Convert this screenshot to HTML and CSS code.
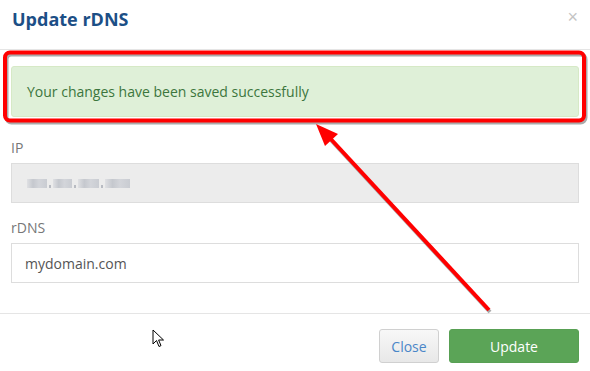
FILE: index.html
```html
<!DOCTYPE html>
<html>
<head>
  <title>Update rDNS</title>
  <link rel="stylesheet" href="styles.css">
</head>
<body>
  <div class="modal">
    <div class="modal-header">
      <h4 class="modal-title">Update rDNS</h4>
      <span class="close-x">&times;</span>
    </div>

    <div class="modal-body">
      <div class="alert-success">Your changes have been saved successfully</div>

      <div class="form-group">
        <label>IP</label>
        <div class="input disabled">
          <span class="blur b1"></span><span class="dot"></span>
          <span class="blur b2"></span><span class="dot"></span>
          <span class="blur b3"></span><span class="dot"></span>
          <span class="blur b4"></span>
        </div>
      </div>

      <div class="form-group">
        <label>rDNS</label>
        <input type="text" class="input" value="mydomain.com">
      </div>
    </div>

    <div class="modal-footer">
      <button class="btn btn-default">Close</button>
      <button class="btn btn-success">Update</button>
    </div>
  </div>

  <!-- annotation drawn over the screenshot -->
  <svg class="annotation" width="590" height="371" viewBox="0 0 590 371">
    <rect x="6.5" y="54.5" width="579" height="68" rx="5" fill="none" stroke="#555" stroke-opacity="0.5" stroke-width="4"/>
    <rect x="5" y="52.5" width="579" height="68" rx="5" fill="none" stroke="#ff0000" stroke-width="4"/>
    <line x1="490" y1="312" x2="329" y2="138" stroke="#555" stroke-opacity="0.5" stroke-width="4"/>
    <line x1="489" y1="310" x2="328" y2="136" stroke="#ff0000" stroke-width="4"/>
    <polygon points="316,124 338,134 325,146" fill="#ff0000"/>
  </svg>

  <svg class="cursor" width="14" height="20" viewBox="0 0 14 20">
    <path d="M1 1 L1 15 L4.5 11.5 L7 17.5 L9 16.6 L6.6 11 L11.5 11 Z" fill="#fff" stroke="#000" stroke-width="1"/>
  </svg>
</body>
</html>
```

FILE: styles.css
```css
body {
  margin: 0;
  padding: 0;
  background: #fff;
  font-family: "Open Sans", "Liberation Sans", sans-serif;
  font-size: 14px;
  color: #555;
  position: relative;
  width: 590px;
  height: 371px;
  overflow: hidden;
}
.modal {
  width: 590px;
}
.modal-header {
  height: 49px;
  border-bottom: 1px solid #e5e5e5;
  display: flex;
  justify-content: space-between;
  align-items: flex-start;
  padding: 0 12px;
}
.modal-title {
  margin: 7px 0 0 0;
  font-size: 18px;
  font-weight: bold;
  color: #1c4f86;
}
.close-x {
  margin-top: 7px;
  font-size: 18px;
  color: #c4c4c4;
  font-family: "Liberation Sans", sans-serif;
}
.modal-body {
  padding: 16px 11px 30px 11px;
}
.alert-success {
  height: 49px;
  line-height: 49px;
  background: #dff0d8;
  border: 1px solid #d6e9c6;
  border-radius: 3px;
  color: #3c763d;
  padding: 0 15px;
}
.form-group {
  margin-top: 21px;
}
.form-group + .form-group {
  margin-top: 15px;
}
label {
  display: block;
  color: #777;
  margin-bottom: 5px;
  line-height: 20px;
}
.input {
  box-sizing: border-box;
  display: flex;
  align-items: center;
  width: 568px;
  height: 40px;
  border: 1px solid #ddd;
  background: #fff;
  padding: 0 13px;
  font-family: "Open Sans", "Liberation Sans", sans-serif;
  font-size: 14px;
  color: #555;
  margin: 0;
  outline: none;
}
.input.disabled {
  background: #ececec;
  padding-left: 15px;
}
.blur {
  display: inline-block;
  height: 9px;
  background: linear-gradient(90deg, #dfe0e3, #c5c8ce 30%, #d3d5da 60%, #c9ccd2);
}
.b1 { width: 20px; }
.b2 { width: 19px; }
.b3 { width: 21px; }
.b4 { width: 25px; }
.dot {
  display: inline-block;
  width: 2px;
  height: 3px;
  margin: 6px 2px 0 2px;
  background: #b8bbc2;
}
.modal-footer {
  border-top: 1px solid #e5e5e5;
  display: flex;
  justify-content: flex-end;
  gap: 10px;
  padding: 15px 11px 0 0;
}
.btn {
  height: 34px;
  border-radius: 3px;
  font-family: "Open Sans", "Liberation Sans", sans-serif;
  font-size: 14px;
  cursor: pointer;
}
.btn-default {
  width: 60px;
  background: linear-gradient(#f8f8f8, #e8e8e8);
  border: 1px solid #d0d0d0;
  color: #4a86c8;
}
.btn-success {
  width: 130px;
  background: #5ba457;
  border: 1px solid #58a054;
  color: #fff;
}
.annotation {
  position: absolute;
  left: 0;
  top: 0;
  pointer-events: none;
}
.cursor {
  position: absolute;
  left: 152px;
  top: 329px;
}
```
